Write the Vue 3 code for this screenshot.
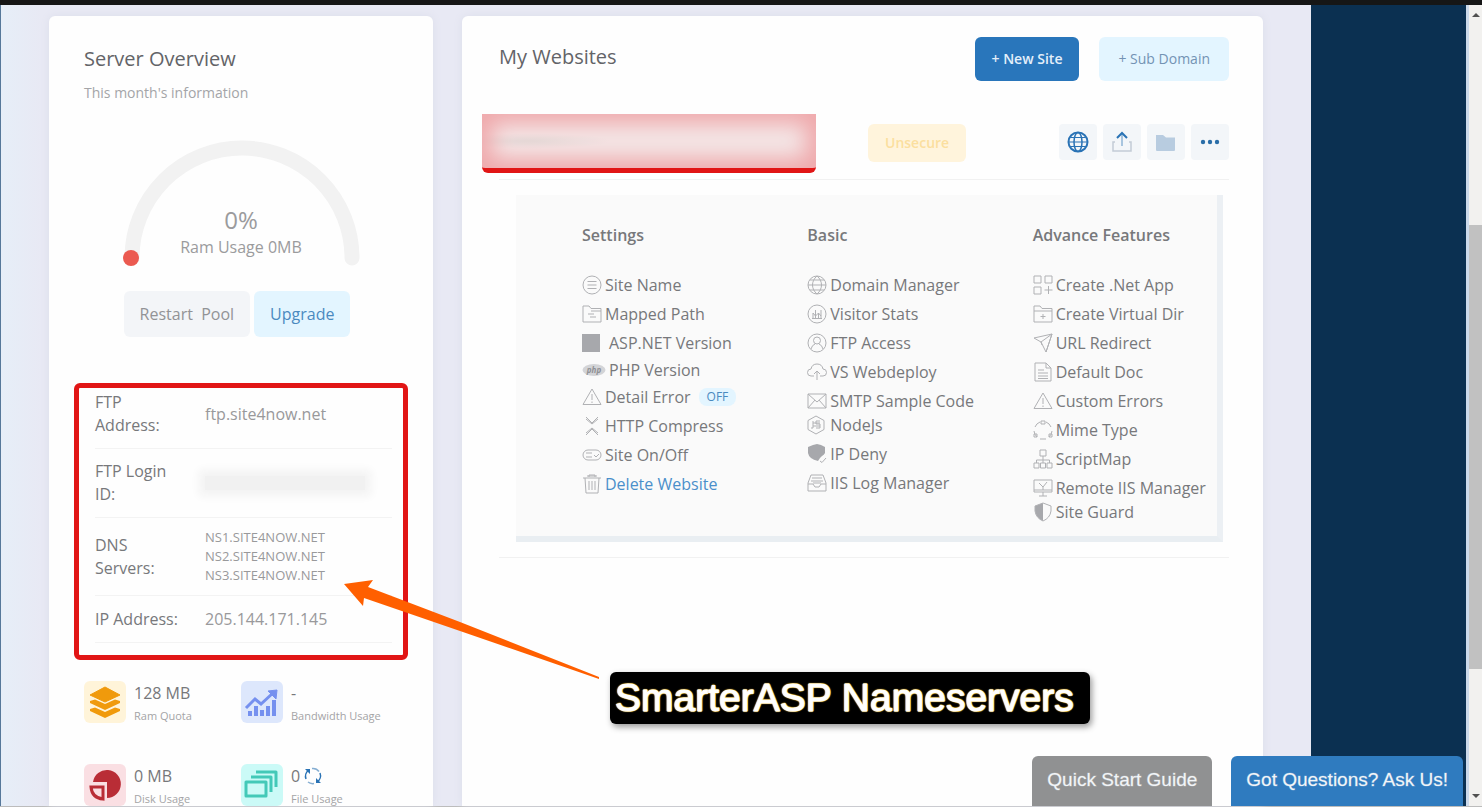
<template>
  <div class="page">
    <div class="top-edge"></div>
    <div class="viewport">
      <main class="content">
        <section class="card overview">
          <h2 class="card-title">Server Overview</h2>
          <p class="subtitle">This month's information</p>

          <div class="gauge">
            <svg class="gauge-arc" viewBox="0 0 240 128" aria-hidden="true">
              <path d="M11 119A110 110 0 0 1 231 119" fill="none" stroke="#f2f2f2" stroke-width="15" stroke-linecap="round" />
              <circle cx="10" cy="119" r="8" fill="#eb5a50" />
            </svg>
            <div class="gauge-text">
              <span class="gauge-value">0%</span>
              <span class="gauge-label">Ram Usage 0MB</span>
            </div>
          </div>

          <div class="pool-actions">
            <button class="btn btn-grey">Restart&nbsp; Pool</button>
            <button class="btn btn-light">Upgrade</button>
          </div>

          <div class="info-box">
            <table class="info">
              <tbody>
                <tr v-for="row in info" :key="row.label">
                  <th scope="row">{{ row.label }}</th>
                  <td v-if="row.hidden"><span class="redacted"></span></td>
                  <td v-else :class="{ small: row.values.length > 1 }">
                    <div v-for="v in row.values" :key="v">{{ v }}</div>
                  </td>
                </tr>
              </tbody>
            </table>
          </div>

          <div class="stats">
            <div class="stat">
              <svg class="stat-icon yellow" viewBox="0 0 42 42" aria-hidden="true">
                <path d="M21 6L36 14L21 21L6 14Z" fill="#f09a0c" stroke="#f09a0c" stroke-width="1" stroke-linejoin="round" />
                <path d="M6 20L11 18.500L21 23L31 18.500L36 20V22L21 29L6 22ZM6 28L11 26.500L21 31L31 26.500L36 28V30L21 37L6 30Z" fill="#f09a0c" />
              </svg>
              <div>
                <div class="stat-value">128 MB</div>
                <div class="stat-label">Ram Quota</div>
              </div>
            </div>
            <div class="stat">
              <svg class="stat-icon blue" viewBox="0 0 42 42" aria-hidden="true">
                <path d="M5 27L14 18L20 23L32 12" fill="none" stroke="#7590ef" stroke-width="3" />
                <path d="M27 10L36 9L35 18Z" fill="#7590ef" stroke="#7590ef" />
                <path d="M9 35V30M15 35V25M21 35V29M27 35V25M33 35V19" fill="none" stroke="#7590ef" stroke-width="4" />
              </svg>
              <div>
                <div class="stat-value">-</div>
                <div class="stat-label">Bandwidth Usage</div>
              </div>
            </div>
            <div class="stat">
              <svg class="stat-icon red" viewBox="0 0 42 42" aria-hidden="true">
                <path d="M23 34V18H9A14 14 0 1 1 23 34Z" fill="#b92d36" />
                <path d="M19 23V35Q8 34 7 23Z" fill="none" stroke="#b92d36" stroke-width="3" />
              </svg>
              <div>
                <div class="stat-value">0 MB</div>
                <div class="stat-label">Disk Usage</div>
              </div>
            </div>
            <div class="stat">
              <svg class="stat-icon teal" viewBox="0 0 42 42" aria-hidden="true">
                <g fill="none" stroke="#43c9b8" stroke-width="3" stroke-linejoin="round">
                  <rect x="5" y="18" width="20" height="14" />
                  <path d="M10 13H30V28M15 8H35V23" />
                </g>
              </svg>
              <div>
                <div class="stat-value">
                  0
                  <button class="refresh" aria-label="Refresh">
                    <svg viewBox="0 0 18 18" fill="none" stroke="#2a73b5">
                      <path d="M2 12A7.500 7.500 0 0 1 5 3M16 6A7.500 7.500 0 0 1 13 15" stroke-width="1.500" />
                      <path d="M8 1.500A7.500 7.500 0 0 1 15 4.500M10 16.500A7.500 7.500 0 0 1 4 15" stroke="#85aed2" stroke-width="1.500" />
                      <path d="M1 2H6V7ZM17 16H12V11Z" fill="#2a73b5" stroke="none" />
                    </svg>
                  </button>
                </div>
                <div class="stat-label">File Usage</div>
              </div>
            </div>
          </div>
        </section>

        <section class="card websites">
          <header class="websites-head">
            <h2 class="card-title">My Websites</h2>
            <button class="btn btn-primary">+ New Site</button>
            <button class="btn btn-light btn-sub">+ Sub Domain</button>
          </header>

          <div class="site-row">
            <div class="site-name"></div>
            <span class="badge">Unsecure</span>
            <div class="tools">
              <button class="tool" aria-label="Open site">
                <svg viewBox="0 0 22 22" fill="none" stroke="#2a73b5" stroke-width="2">
                  <circle cx="11" cy="11" r="9.500" />
                  <ellipse cx="11" cy="11" rx="4" ry="9.500" stroke-width="1.500" />
                  <path d="M2 11H20M3.500 6.500H18.500M3.500 15.500H18.500" stroke-width="1" />
                </svg>
              </button>
              <button class="tool" aria-label="Upload">
                <svg viewBox="0 0 22 22" fill="none">
                  <path d="M4 11H2V20H20V11H18" stroke="#c3ccd6" stroke-width="1.500" />
                  <path d="M11 15V3" stroke="#8fb4d6" stroke-width="1.500" />
                  <path d="M6 7L11 2L16 7" stroke="#2a73b5" stroke-width="2" />
                </svg>
              </button>
              <button class="tool" aria-label="Files">
                <svg viewBox="0 0 22 22"><path d="M1 4H8L11 6.500H20V19Q20 20 19 20H2Q1 20 1 19Z" fill="#b8cce0" /></svg>
              </button>
              <button class="tool" aria-label="More">
                <svg viewBox="0 0 22 22" fill="#2a6ea8">
                  <circle cx="4" cy="11" r="2.200" /><circle cx="11" cy="11" r="2.200" /><circle cx="18" cy="11" r="2.200" />
                </svg>
              </button>
            </div>
          </div>

          <div class="panel">
            <div v-for="col in columns" :key="col.title">
              <h3 class="panel-title">{{ col.title }}</h3>
              <ul class="links">
                <li v-for="item in col.items" :key="item.text" :class="item.row">
                  <a href="#" :class="{ danger: item.link }">
                    <svg v-if="item.icon === 'php'" class="icon wide" viewBox="0 0 24 20" aria-hidden="true">
                      <ellipse cx="12" cy="10" rx="11.500" ry="6" fill="#d3d4d7" />
                      <text x="12" y="13" text-anchor="middle" class="php">php</text>
                    </svg>
                    <svg v-else class="icon" :class="{ wide: item.icon === 'asp' }" viewBox="0 0 20 20" preserveAspectRatio="xMinYMid" aria-hidden="true">
                      <path v-if="fills[item.icon]" :d="fills[item.icon]" fill="#a7a8ac" />
                      <path :d="icons[item.icon]" fill="none" stroke="#b0b1b4" />
                    </svg>
                    <span>{{ item.text }}</span>
                  </a>
                  <button v-if="item.toggle" class="toggle">{{ item.toggle }}</button>
                </li>
              </ul>
            </div>
          </div>
          <hr class="rule" />
        </section>
      </main>

      <aside class="navy"></aside>
      <div class="scrollbar" aria-hidden="true">
        <span class="arrow up"></span>
        <span class="track"><span class="thumb"></span></span>
        <span class="arrow down"></span>
      </div>
    </div>

    <div class="floating">
      <button class="float-btn guide">Quick Start Guide</button>
      <button class="float-btn ask">Got Questions? Ask Us!</button>
    </div>

    <svg class="pointer" viewBox="0 0 256 100" aria-hidden="true">
      <path d="M0 4L29 0L24 7L116 42L255 97V99L116 51L20 18L19 26Z" fill="#ff5f00" />
    </svg>
    <div class="callout">SmarterASP Nameservers</div>
  </div>
</template>

<script setup>
const info = [
  { label: 'FTP Address:', values: ['ftp.site4now.net'] },
  { label: 'FTP Login ID:', hidden: true },
  { label: 'DNS Servers:', values: ['NS1.SITE4NOW.NET', 'NS2.SITE4NOW.NET', 'NS3.SITE4NOW.NET'] },
  { label: 'IP Address:', values: ['205.144.171.145'] },
]

const columns = [
  {
    title: 'Settings',
    items: [
      { icon: 'name', text: 'Site Name' },
      { icon: 'path', text: 'Mapped Path' },
      { icon: 'asp', text: 'ASP.NET Version' },
      { icon: 'php', text: 'PHP Version', row: 'short' },
      { icon: 'warn', text: 'Detail Error', toggle: 'OFF' },
      { icon: 'compress', text: 'HTTP Compress' },
      { icon: 'toggle', text: 'Site On/Off' },
      { icon: 'trash', text: 'Delete Website', link: true },
    ],
  },
  {
    title: 'Basic',
    items: [
      { icon: 'globe', text: 'Domain Manager' },
      { icon: 'stats', text: 'Visitor Stats' },
      { icon: 'user', text: 'FTP Access' },
      { icon: 'cloud', text: 'VS Webdeploy' },
      { icon: 'mail', text: 'SMTP Sample Code' },
      { icon: 'node', text: 'NodeJs', row: 'compact' },
      { icon: 'deny', text: 'IP Deny' },
      { icon: 'log', text: 'IIS Log Manager' },
    ],
  },
  {
    title: 'Advance Features',
    items: [
      { icon: 'app', text: 'Create .Net App' },
      { icon: 'dir', text: 'Create Virtual Dir' },
      { icon: 'plane', text: 'URL Redirect' },
      { icon: 'doc', text: 'Default Doc' },
      { icon: 'warn', text: 'Custom Errors' },
      { icon: 'mime', text: 'Mime Type' },
      { icon: 'map', text: 'ScriptMap' },
      { icon: 'remote', text: 'Remote IIS Manager' },
      { icon: 'guard', text: 'Site Guard', row: 'compact' },
    ],
  },
]

const circle = 'M10 1A9 9 0 1 1 10 19A9 9 0 1 1 10 1Z'

const icons = {
  name: circle + 'M5.500 6.500H14.500M5.500 10H14.500M5.500 13.500H14.500',
  path: 'M1 2H7L9 4.500H19V18H1ZM9 7H19M6 10H12M8 13H14',
  asp: '',
  warn: 'M10 2L19 17.500H1ZM10 7V13M10 14.500V16',
  compress: 'M4 1L10 7L16 1M4 3L10 8L16 3M4 19L10 13L16 19M4 17L10 12L16 17',
  toggle: 'M6 5H14A5 5 0 0 1 14 15H6A5 5 0 0 1 6 5ZM4 8H10M4 12H10M12 10L14 12L17 9',
  trash: 'M1 4H19M7 3V1H13V3M3 4L4 19H16L17 4M7 7V16M10 7V16M13 7V16M5 2H15',
  globe: circle + 'M10 1C4 6 4 14 10 19C16 14 16 6 10 1ZM1 10H19M3 5H17M3 15H17',
  stats: circle + 'M5 14.500H15M6 14V9M8.500 14V6M11.500 14V9M14 14V6M6 9L8.500 12L11.500 9L14 12',
  user: circle + 'M10 4A3.500 3.500 0 1 1 10 11A3.500 3.500 0 1 1 10 4ZM4 16Q5 12 8 11M16 16Q15 12 12 11',
  cloud: 'M7 14H4A3.500 3.500 0 0 1 4 7Q5 2 10 2Q15 2 16 7A3.500 3.500 0 0 1 16 14H13M10 18V9M7 12L10 9L13 12',
  mail: 'M1 3H19V17H1ZM1 3L10 11L19 3M1 17L8 9M19 17L12 9',
  node: 'M9 1L17 5.500V14.500L9 19L1 14.500V5.500ZM6 6V13H4M13 6H9V9H13V13H9M6 8H13M6 11H13',
  deny: 'M13 17L15 18.500L19 14',
  log: 'M4 2H16L19 10V18H1V10ZM1 11H6L8 14H12L14 11H19M5 5H15M4 8H16M6 10H14',
  app: 'M1 1H8V8H1ZM12 1H19V8H12ZM1 12H8V19H1ZM15.500 11V19M11.500 15H19.500',
  dir: 'M1 2H7L9 4.500H19V18H1ZM1 7H19M10 10V15M7.500 12.500H12.500',
  plane: 'M19 1L1 5L8 9L13 19ZM19 1L8 9L9 12M19 1L13 19',
  doc: 'M2 1H13L18 6V19H2ZM13 1V6H18M5 8H11M5 11H15M5 14H15M5 16.500H15',
  mime: 'M13 2A9 9 0 0 1 18 7M19 11A9 9 0 0 1 16 17M13 19H7M4 17A9 9 0 0 1 1 11M2 7A9 9 0 0 1 7 2M8 1H12V4H8ZM16 14H19V17H16ZM1 14H4V17H1Z',
  map: 'M7 1H13V7H7ZM10 7V11M3.500 14V11H16.500V14M10 11V14M1 14H6V19H1ZM7.500 14H12.500V19H7.500ZM14 14H19V19H14Z',
  remote: 'M1 2H19V14H1ZM6 18H14M10 14V18M1 12H19M6 5L10 9L14 4M10 9V12',
  guard: 'M10 1L18 4V9Q17 16 10 19Q3 16 2 9V4Z',
}

const fills = {
  asp: 'M0 1H18V19H0Z',
  deny: 'M1 3L6 1L10 0L14 1L18 3V9Q17 11 15 12L13 14L11 17Q2 15 1 9Z',
  guard: 'M10 1V19Q3 16 2 9V4Z',
}
</script>

<style>
body { margin: 0; }
</style>

<style scoped>
* { box-sizing: border-box; }
.page {
  position: relative; height: 100vh; overflow: hidden;
  display: flex; flex-direction: column;
  font-family: "Open Sans", "Noto Sans", sans-serif; font-size: 16px; color: #77787b;
}
button { font-family: inherit; border: none; cursor: pointer; }
.top-edge { height: 5px; background: #161616; flex-shrink: 0; }
.viewport { flex: 1; min-height: 0; display: flex; border-bottom: 1px solid #bcbcbc; }

.content {
  flex: 1; min-width: 0; display: flex; gap: 29px;
  padding: 11px 48px 0; border-left: 1px solid #56789a;
  background: linear-gradient(90deg, #e6eef8, #e8e9f4 40px);
}
.card { background: #fefefe; border-radius: 6px 6px 0 0; box-shadow: 0 0 8px #dcdeea; }
.card-title { margin: 0; font-size: 20px; line-height: 28px; font-weight: 400; color: #636468; }

.overview { width: 384px; flex-shrink: 0; padding: 29px 35px 0; }
.subtitle { margin: 10px 0 0; font-size: 14px; line-height: 20px; color: #a4a5a8; }

.gauge { display: grid; justify-content: center; margin-top: 36px; }
.gauge-arc { grid-area: 1 / 1; width: 240px; height: 128px; }
.gauge-text {
  grid-area: 1 / 1; align-self: end; padding-bottom: 8px;
  display: flex; flex-direction: column; align-items: center; color: #9b9b9d;
}
.gauge-value { font-size: 24px; line-height: 30px; }
.gauge-label { font-size: 16px; line-height: 24px; }

.pool-actions { display: flex; justify-content: center; gap: 4px; margin: 24px 8px 0 0; }
.btn { border-radius: 6px; font-size: 16px; line-height: 22px; padding: 12px 16px; }
.btn-grey { background: #f3f5f8; color: #929396; }
.btn-light { background: #e3f5ff; color: #4b8abf; }

.info-box { margin: 46px -10px 0; border: 5px solid #e11515; border-radius: 6px; padding: 0 11px 12px 16px; }
.info { width: 100%; border-collapse: collapse; table-layout: fixed; }
.info th {
  width: 110px; padding: 11px 20px 11px 0; text-align: left; vertical-align: middle;
  font-weight: 400; line-height: 23px;
}
.info td { padding: 0; line-height: 23px; color: #99999b; }
.info tr { border-bottom: 1px solid #f3f3f3; }
.info tr:first-child th { padding-top: 3px; }
.info tr:first-child td { padding-bottom: 8px; }
.info tr:last-child th { padding: 12px 0 11px; }
.info tr:last-child td { padding-top: 1px; }
.info .small { padding: 10px 0; font-size: 13px; line-height: 19px; }
.redacted { display: block; width: 160px; height: 14px; background: #f1f1f1; box-shadow: 0 0 10px 6px #f3f3f3; }

.stats { display: grid; grid-template-columns: 1fr 1fr; row-gap: 37px; margin-top: 21px; }
.stat { display: flex; gap: 8px; align-items: flex-start; height: 46px; }
.stat-icon { width: 42px; height: 42px; border-radius: 6px; flex-shrink: 0; }
.yellow { background: #fff4d9; }
.blue { background: #dde7fc; }
.red { background: #fadfe3; }
.teal { background: #cbfaf7; }
.stat-value { display: flex; align-items: center; gap: 4px; font-size: 16px; line-height: 24px; }
.stat-label { font-size: 11px; line-height: 22px; color: #a4a4a6; white-space: nowrap; }
.refresh { width: 18px; height: 18px; padding: 0; background: none; }
.refresh svg { display: block; }

.websites { flex: 1; min-width: 0; padding: 21px 34px 0 37px; }
.websites-head { display: flex; align-items: flex-start; gap: 20px; }
.websites-head .card-title { flex: 1; line-height: 40px; }
.websites-head .btn { font-size: 14px; line-height: 20px; padding: 12px 17px; }
.btn-primary { background: #2976bb; color: #e3effa; font-weight: 600; }
.websites-head .btn-sub { padding: 12px 19px; color: #7393b4; }

.site-row {
  display: flex; align-items: flex-start; margin-top: 33px;
  padding-bottom: 6px; border-bottom: 1px solid #f1f1f1;
}
.site-name {
  width: 334px; height: 59px; margin-left: -17px;
  border-bottom: 5px solid #e11515; border-radius: 0 0 6px 6px;
  background: radial-gradient(ellipse at 14% 50%, #e3dddb, #f4e8e8 20%);
  box-shadow: inset 0 0 22px 10px #efa8ab;
}
.badge {
  margin: 10px 0 0 52px; padding: 8px 17px; border-radius: 6px;
  background: #fff4dc; color: #fbdf9f; font-size: 14px; line-height: 22px; font-weight: 600;
}
.tools { display: flex; gap: 6px; margin: 10px 0 0 auto; }
.tool { width: 38px; height: 36px; padding: 0; border-radius: 4px; background: #f3f6f9; display: grid; place-items: center; }
.tool svg { width: 22px; height: 22px; }

.panel {
  display: grid; grid-template-columns: 11fr 11fr 9fr;
  margin: 15px 6px 0 17px; padding: 28px 0 10px 66px;
  background: #fafafa; border-right: 6px solid #ecf0f4; border-bottom: 6px solid #e9eef2;
}
.panel-title { margin: 0 0 23px; font-size: 16px; line-height: 24px; font-weight: 600; color: #77787b; }
.links { list-style: none; margin: 0; padding: 0; }
.links li { height: 29px; display: flex; align-items: center; gap: 8px; white-space: nowrap; }
.links .short { height: 25px; }
.links .compact { height: 24px; align-items: flex-start; }
.links a { display: flex; align-items: center; gap: 3px; color: #77787b; text-decoration: none; line-height: 20px; }
.links .danger { color: #4a8fca; }
.icon { width: 20px; height: 20px; flex-shrink: 0; }
.icon.wide { width: 24px; }
.php { font-size: 8px; font-style: italic; font-weight: 700; fill: #8f9094; }
.toggle { padding: 0 8px; border-radius: 8px; background: #e3f5ff; color: #4b8abf; font-size: 12px; line-height: 18px; }
.rule { margin: 15px 0 0; border: none; border-top: 1px solid #f1f1f1; }

.navy { width: 155px; flex-shrink: 0; background: #0b3051; }
.scrollbar {
  width: 16px; flex-shrink: 0; background: #f2f1ef; border-left: 3px solid #cbd9ea;
  display: flex; flex-direction: column; align-items: center; padding: 8px 0;
}
.track { flex: 1; width: 100%; padding-top: 204px; }
.thumb { display: block; height: 78%; background: #c1c1c1; }
.arrow { border: 4px solid transparent; }
.arrow.up { border-top: none; border-bottom-color: #505050; margin-bottom: 4px; }
.arrow.down { border-bottom: none; border-top-color: #505050; }

.floating { position: absolute; right: 19px; bottom: 1px; display: flex; gap: 19px; }
.float-btn {
  padding: 12px 15px 14px; border-radius: 6px 6px 0 0;
  font-family: "Liberation Sans", Arial, sans-serif; font-size: 19px; line-height: 24px; color: #f2f5f8;
  -webkit-text-stroke: 1px #f2f5f844;
}
.guide { background: #909192; }
.ask { background: #2f7bbf; }

.pointer { position: absolute; left: 344px; top: 580px; width: 256px; height: 100px; }
.callout {
  position: absolute; left: 610px; top: 672px; padding: 3px 16px 3px 5px; border-radius: 6px;
  background: #000; color: #fff; box-shadow: 2px 3px 6px #999;
  font-family: "Liberation Sans", Arial, sans-serif; font-size: 39px; line-height: 46px; white-space: nowrap;
  -webkit-text-stroke: 1px #fff;
  text-shadow: 1px 0 1px #e8b93a, -1px 0 1px #e8b93a, 0 1px 1px #e8b93a, 0 -1px 1px #e8b93a;
}
</style>
